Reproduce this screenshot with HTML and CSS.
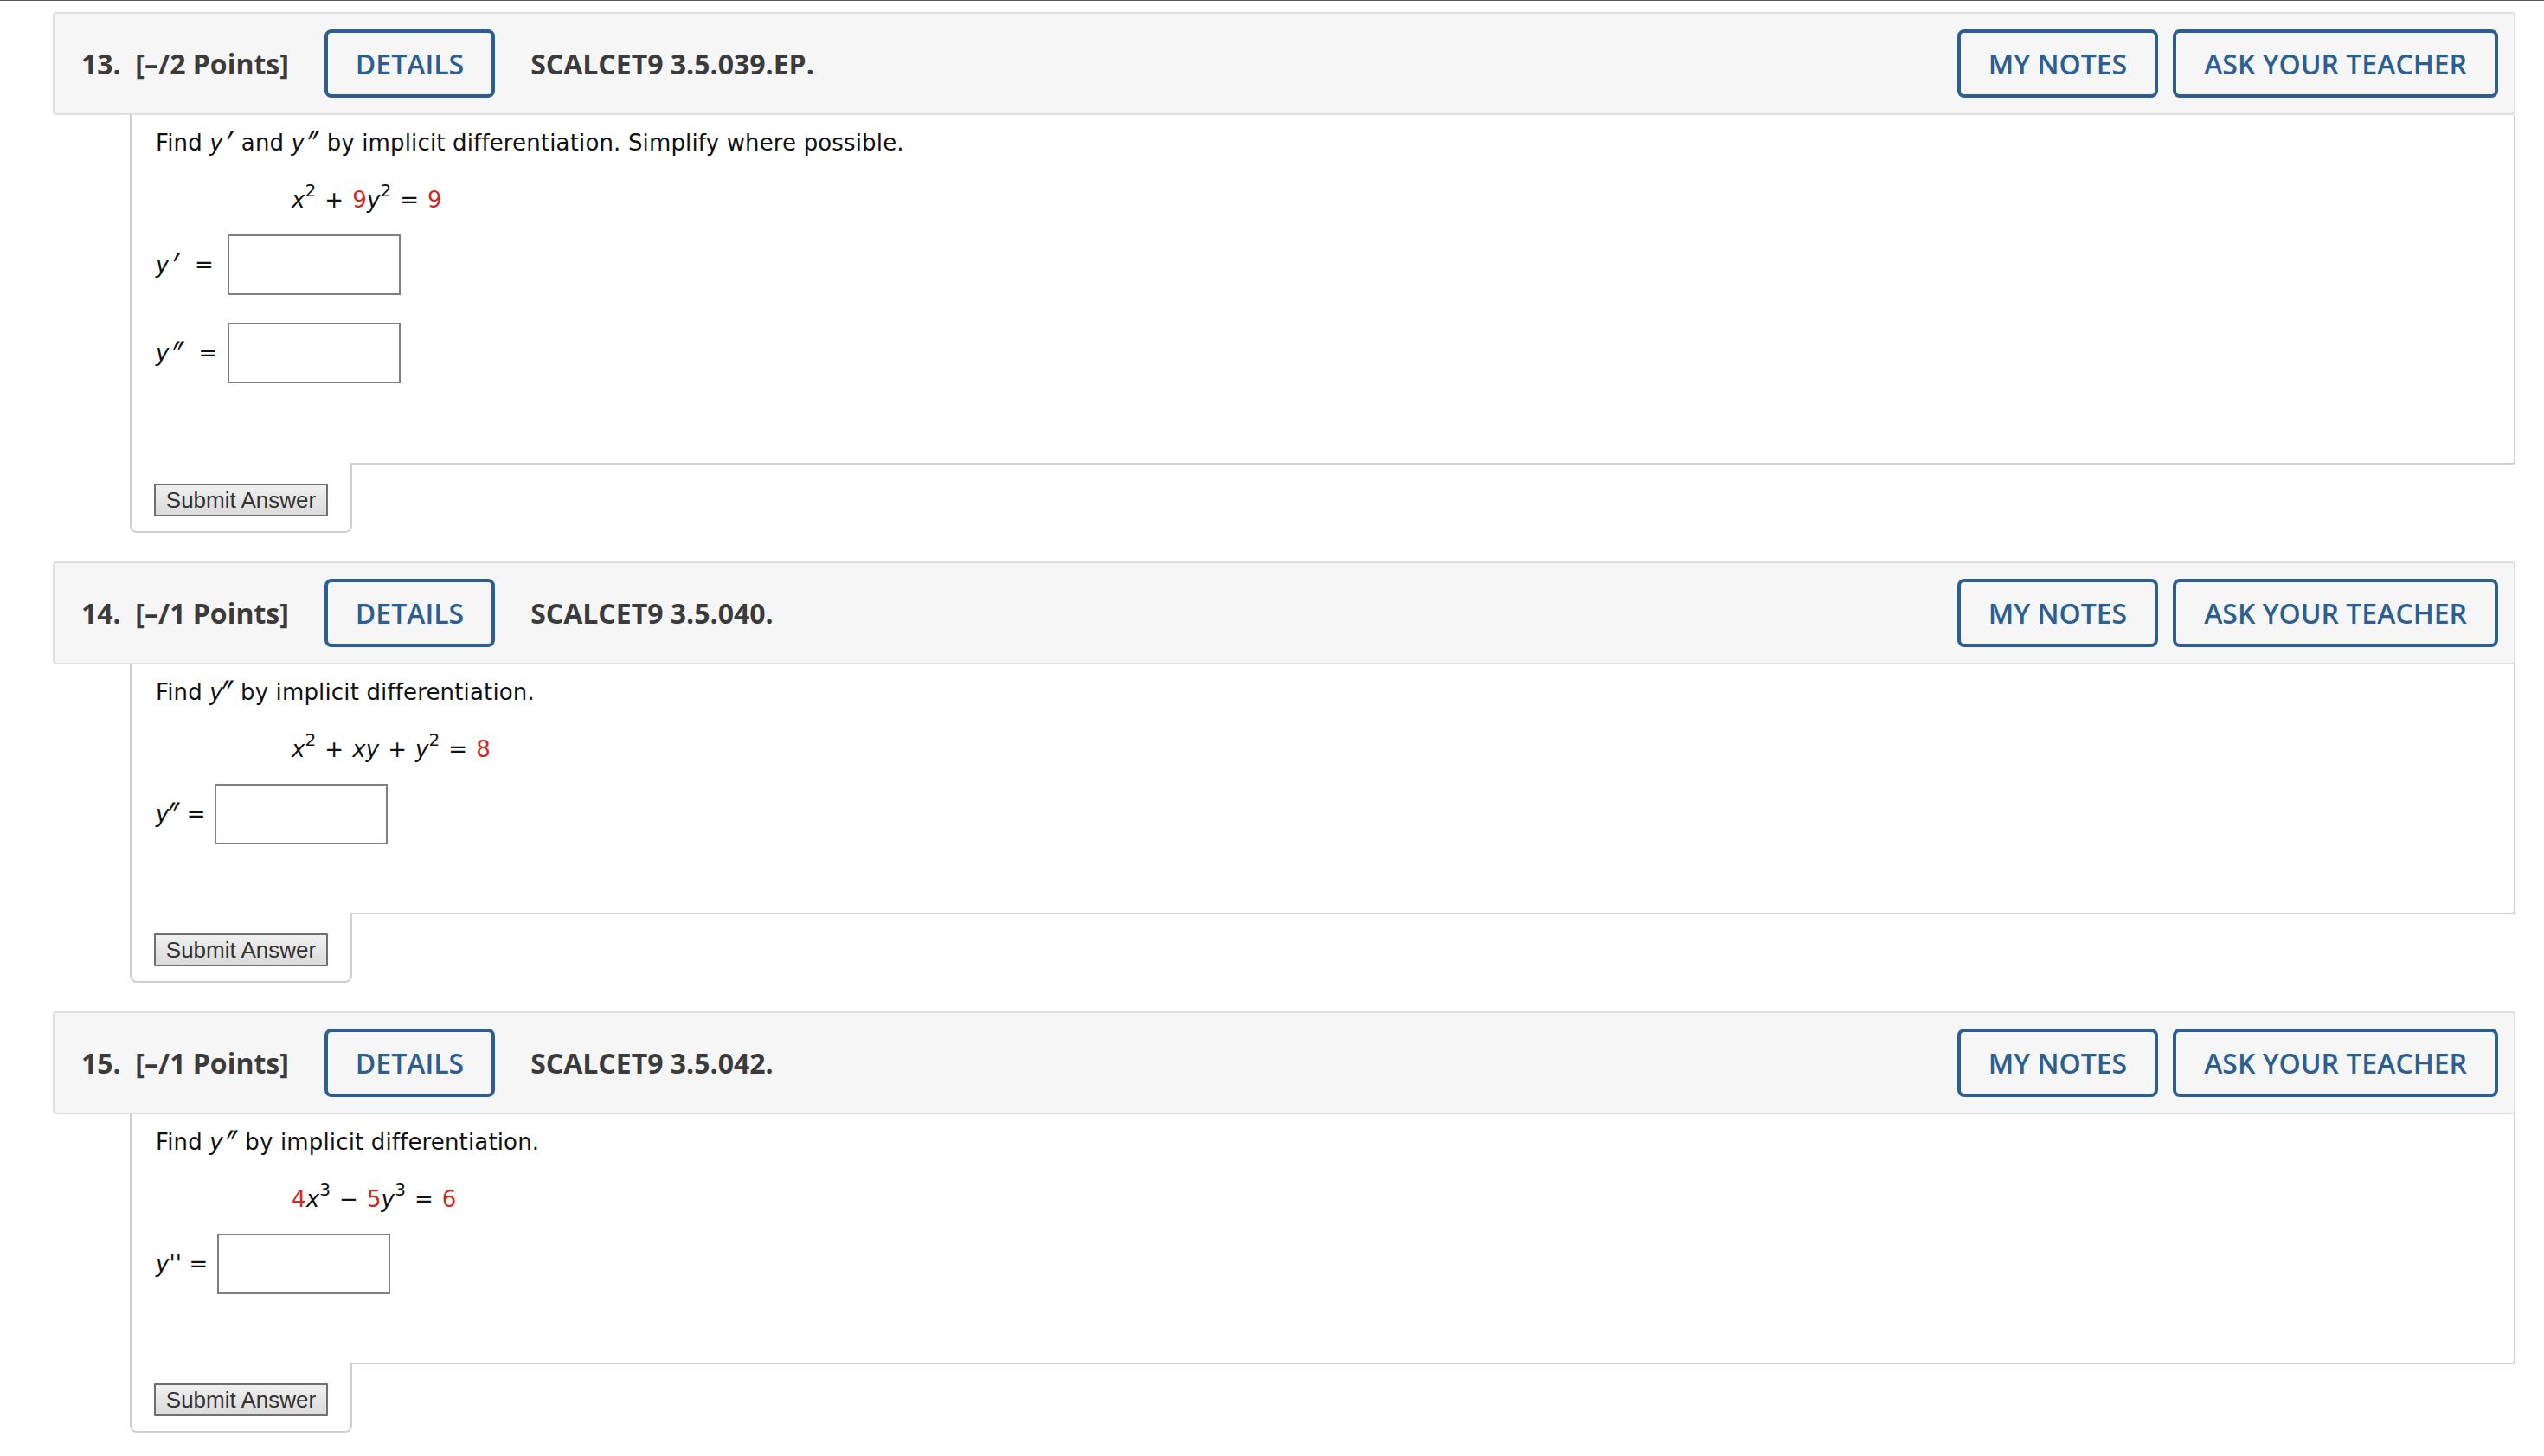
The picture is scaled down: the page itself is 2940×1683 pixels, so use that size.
FILE: index.html
```html
<!DOCTYPE html>
<html lang="en">
<head>
<meta charset="utf-8">
<title>Questions</title>
<link rel="stylesheet" href="styles.css">
</head>
<body>
<div class="topline"></div>
<main class="page">

  <section class="question">
    <header class="qhead">
      <div class="qleft">
        <span class="qtitle">13.&nbsp; [–/2 Points]</span>
        <button class="hbtn" type="button">DETAILS</button>
        <span class="qtitle">SCALCET9 3.5.039.EP.</span>
      </div>
      <div class="qright">
        <button class="hbtn" type="button">MY NOTES</button>
        <button class="hbtn" type="button">ASK YOUR TEACHER</button>
      </div>
    </header>
    <div class="qbody qb-13">
      <p class="prompt">Find <i>y</i>&thinsp;<span class="pr">′</span> and <i>y</i>&thinsp;<span class="pr">″</span> by implicit differentiation. Simplify where possible.</p>
      <p class="eq"><i>x</i><sup>2</sup> + <span class="red">9</span><i>y</i><sup>2</sup> = <span class="red">9</span></p>
      <div class="row"><span class="lbl lbl-wide"><i>y</i>&thinsp;<span class="pr">′</span> &nbsp;=</span><span class="box"></span></div>
      <div class="row row-2"><span class="lbl lbl-wide"><i>y</i>&thinsp;<span class="pr">″</span> &nbsp;=</span><span class="box"></span></div>
    </div>
    <div class="tab"><button class="submit" type="button">Submit Answer</button></div>
  </section>

  <section class="question">
    <header class="qhead">
      <div class="qleft">
        <span class="qtitle">14.&nbsp; [–/1 Points]</span>
        <button class="hbtn" type="button">DETAILS</button>
        <span class="qtitle">SCALCET9 3.5.040.</span>
      </div>
      <div class="qright">
        <button class="hbtn" type="button">MY NOTES</button>
        <button class="hbtn" type="button">ASK YOUR TEACHER</button>
      </div>
    </header>
    <div class="qbody qb-short">
      <p class="prompt">Find <i>y</i><span class="pr">″</span> by implicit differentiation.</p>
      <p class="eq"><i>x</i><sup>2</sup> + <i>xy</i> + <i>y</i><sup>2</sup> = <span class="red">8</span></p>
      <div class="row"><span class="lbl lbl-tight"><i>y</i><span class="pr">″</span> =</span><span class="box"></span></div>
    </div>
    <div class="tab"><button class="submit" type="button">Submit Answer</button></div>
  </section>

  <section class="question">
    <header class="qhead">
      <div class="qleft">
        <span class="qtitle">15.&nbsp; [–/1 Points]</span>
        <button class="hbtn" type="button">DETAILS</button>
        <span class="qtitle">SCALCET9 3.5.042.</span>
      </div>
      <div class="qright">
        <button class="hbtn" type="button">MY NOTES</button>
        <button class="hbtn" type="button">ASK YOUR TEACHER</button>
      </div>
    </header>
    <div class="qbody qb-short">
      <p class="prompt">Find <i>y</i>&thinsp;<span class="pr">″</span> by implicit differentiation.</p>
      <p class="eq"><span class="red">4</span><i>x</i><sup>3</sup> − <span class="red">5</span><i>y</i><sup>3</sup> = <span class="red">6</span></p>
      <div class="row"><span class="lbl lbl-tight"><i>y''</i> =</span><span class="box"></span></div>
    </div>
    <div class="tab"><button class="submit" type="button">Submit Answer</button></div>
  </section>

</main>
</body>
</html>
```

FILE: styles.css
```css
* {
  box-sizing: border-box;
}

html,
body {
  margin: 0;
  padding: 0;
  background: #ffffff;
}

.topline {
  height: 1px;
  background: #5b5b5b;
}

.page {
  display: flex;
  flex-direction: column;
  gap: 33px;
  padding: 13px 33px 0 61px;
}

/* ---------- header bar ---------- */
.qhead {
  display: flex;
  justify-content: space-between;
  align-items: center;
  height: 119px;
  padding: 0 18px 0 31px;
  background: #f6f6f6;
  border: 2px solid #dedede;
  border-radius: 4px;
}

.qleft,
.qright {
  display: flex;
  align-items: center;
}

.qleft {
  gap: 41px;
}

.qright {
  gap: 17px;
}

.qtitle {
  font-family: "Open Sans", "Liberation Sans", sans-serif;
  font-weight: 700;
  font-size: 32px;
  color: #3b3b3b;
  white-space: pre;
}

.hbtn {
  height: 79px;
  padding: 0 32px;
  border: 4px solid #2b5f92;
  border-radius: 8px;
  background: transparent;
  font-family: "Open Sans", "Liberation Sans", sans-serif;
  font-weight: 600;
  font-size: 32px;
  color: #2b5f92;
  line-height: 1;
}

/* ---------- question body ---------- */
.qbody {
  display: flow-root;
  margin-left: 89px;
  padding: 0 0 0 28px;
  border: 2px solid #cfcfcf;
  border-top: 0;
  border-radius: 0 0 4px 0;
  font-family: "DejaVu Sans", Verdana, sans-serif;
  font-size: 26px;
  letter-spacing: 0.15px;
  color: #111111;
}

.qb-13 {
  padding-bottom: 92px;
}

.qb-short {
  padding-bottom: 79px;
}

.prompt {
  margin: 17px 0 0;
  line-height: 30px;
}

.pr {
  display: inline-block;
  font-size: 31px;
  line-height: 30px;
  vertical-align: top;
  transform: skewX(-8deg) scale(1.15, 1.7);
  transform-origin: 50% 20%;
}

.eq {
  margin: 36px 0 0;
  padding-left: 157px;
  line-height: 30px;
  word-spacing: 1.5px;
}

.eq sup {
  font-size: 20px;
  line-height: 0;
  vertical-align: 13px;
}

.red {
  color: #cf2a1f;
}

.row {
  display: flex;
  align-items: center;
  margin-top: 25px;
}

.row-2 {
  margin-top: 32px;
}

.lbl {
  flex: none;
  white-space: nowrap;
  line-height: 30px;
}

.lbl-wide {
  width: 83px;
}

.lbl-tight {
  margin-right: 10px;
}

.box {
  display: block;
  width: 200px;
  height: 70px;
  border: 2px solid #7f7f7f;
  background: #ffffff;
}

/* ---------- submit tab ---------- */
.tab {
  width: 257px;
  margin: -2px 0 0 89px;
  padding: 24px 26px 17px;
  background: #ffffff;
  border: 2px solid #cfcfcf;
  border-top: 0;
  border-radius: 0 0 8px 8px;
}

.submit {
  display: block;
  width: 201px;
  height: 38px;
  padding: 0;
  border: 2px solid #6f6f6f;
  border-radius: 1px;
  background: linear-gradient(#f0f0f0, #dadada);
  font-family: "Liberation Sans", Arial, sans-serif;
  font-size: 26px;
  line-height: 1;
  color: #333333;
}
```
